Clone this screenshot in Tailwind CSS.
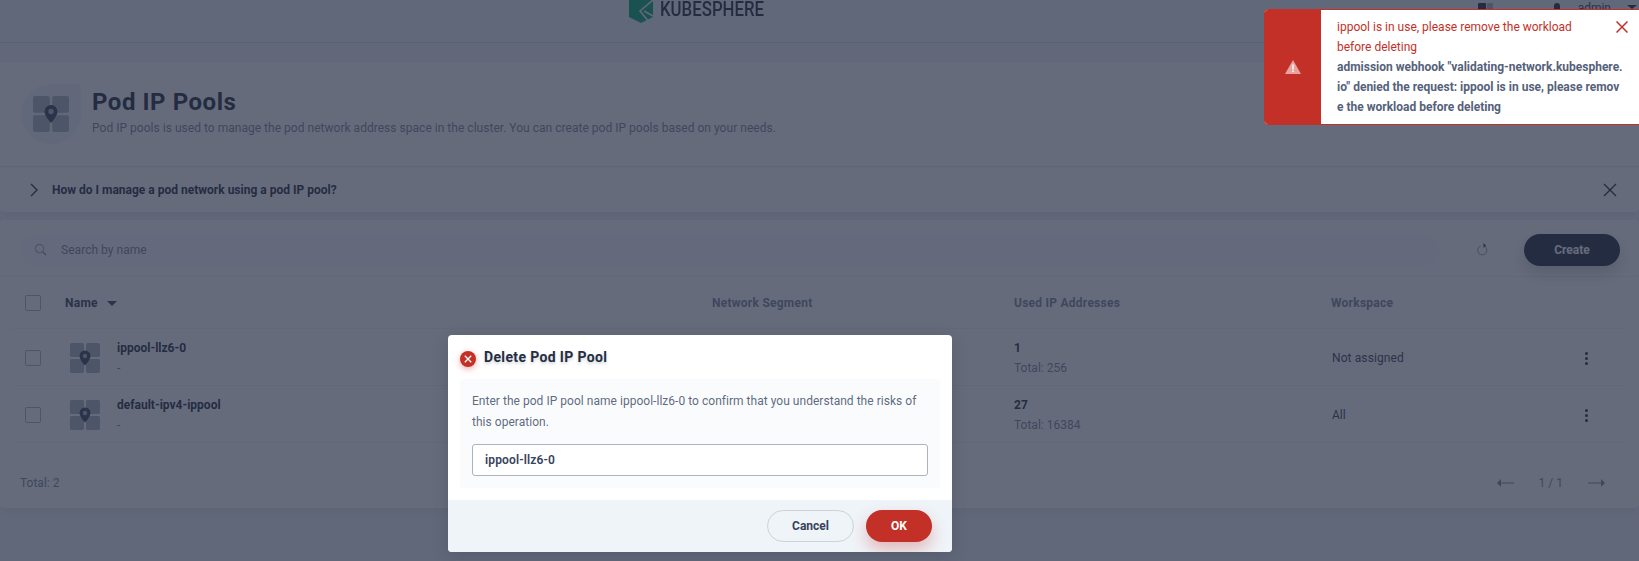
<!DOCTYPE html>
<html lang="en">
<head>
<meta charset="utf-8">
<title>Pod IP Pools</title>
<script src="https://cdn.jsdelivr.net/npm/@tailwindcss/browser@4"></script>
</head>
<body class="m-0">
<div class="relative w-[1639px] h-[561px] overflow-hidden bg-[#eff4f9] font-['Roboto',sans-serif] text-[12px] leading-[20px] text-[#36435c]">

  <!-- page behind the overlay -->
  <header class="flex items-start h-[43px] border-b border-[#d8dee5] pl-[629px] overflow-hidden">
    <svg class="w-[24px] h-[24px] mt-[-1px] mr-[7px]" viewBox="0 0 24 24"><path fill="#00aa72" d="M12 24 0 18V0h24v18z"/><path fill="none" stroke="#eff4f9" stroke-width="1.600" d="M24 1 11 12l10 12M24 17l-9-5"/></svg>
    <span class="inline-block origin-left scale-x-[.8] w-[102px] whitespace-nowrap text-[21px] leading-[19px] font-medium text-[#242e42]">KUBESPHERE</span>
    <div class="ml-auto flex items-start mt-[-2px]">
      <div class="flex gap-[1px] mt-[5px] mr-[61px]"><span class="w-[8px] h-[9px] bg-[#242e42] rounded-[1px]"></span><span class="w-[6px] h-[9px] bg-[#abb4be] rounded-[1px]"></span></div>
      <div class="w-[6px] h-[11px] mt-[5px] mr-[18px] bg-[#242e42] rounded-full"></div>
      <span class="mr-[16px] text-[#36435c]">admin</span>
      <span class="mt-[7px] mr-[2px] w-0 h-0 border-x-[5px] border-x-transparent border-t-[4px] border-t-[#242e42]"></span>
    </div>
  </header>

  <main class="pt-[19px]">
    <section class="bg-white rounded-[4px] shadow-[0_4px_8px_0_rgba(36,46,66,0.06)]">
      <div class="flex items-center h-[105px] pl-[21px] border-b border-[#e3e9ef]">
        <div class="flex items-center justify-center w-[60px] h-[60px] rounded-[30px] rounded-tr-[3px] bg-[#eff4f9]">
          <svg class="w-[36px] h-[36px]" viewBox="0 0 36 36">
            <rect width="16.800" height="16.800" rx="2" fill="#abb4be"/><rect x="19.200" width="16.800" height="16.800" rx="2" fill="#abb4be"/><rect y="19.200" width="16.800" height="16.800" rx="2" fill="#abb4be"/><rect x="19.200" y="19.200" width="16.800" height="16.800" rx="2" fill="#abb4be"/>
            <path fill="#36435c" d="M18 9a6.500 6.500 0 0 0-6.500 6.500c0 4.500 6.500 11.500 6.500 11.500s6.500-7 6.500-11.500A6.500 6.500 0 0 0 18 9z"/><circle cx="18" cy="15.500" r="2.700" fill="#abb4be"/>
          </svg>
        </div>
        <div class="ml-[11px] mt-[-4px]">
          <h1 class="text-[24px] leading-[32px] font-bold text-[#242e42] tracking-[0.55px]">Pod IP Pools</h1>
          <p class="text-[#79879c] tracking-[0.025px]">Pod IP pools is used to manage the pod network address space in the cluster. You can create pod IP pools based on your needs.</p>
        </div>
      </div>
      <div class="flex items-center h-[45px] pl-[28px] pr-[22px] pt-[1px]">
        <svg class="w-[12px] h-[14px] mr-[12px]" viewBox="0 0 12 14" fill="none" stroke="#242e42" stroke-width="1.400"><path d="M3 1l6 6-6 6"/></svg>
        <span class="font-bold text-[#242e42]">How do I manage a pod network using a pod IP pool?</span>
        <svg class="ml-auto w-[14px] h-[14px]" viewBox="0 0 14 14" fill="none" stroke="#242e42" stroke-width="1.400"><path d="M1 1l12 12M13 1 1 13"/></svg>
      </div>
    </section>

    <section class="mt-[8px] h-[288px] bg-white rounded-[4px] shadow-[0_4px_8px_0_rgba(36,46,66,0.06)]">
      <div class="flex items-center h-[57px] pl-[20px] pr-[19px] pt-[3px] border-b border-[#eff4f9]">
        <div class="flex items-center flex-1 h-[32px] pl-[14px] rounded-full bg-[#f9fbfd]">
          <svg class="w-[13px] h-[13px] mr-[14px]" viewBox="0 0 14 14" fill="none" stroke="#abb4be" stroke-width="1.300"><circle cx="6" cy="6" r="4.500"/><path stroke="#79879c" d="M9.500 9.500 13 13"/></svg>
          <span class="text-[#79879c] tracking-[0.04px]">Search by name</span>
        </div>
        <svg class="ml-[37px] mr-[36px] w-[11px] h-[13px]" viewBox="0 0 11 13" fill="none" stroke="#abb4be" stroke-width="1.200"><path d="M7 3a4.600 4.600 0 1 1-3.500 0"/><path fill="#36435c" stroke="none" d="M6.500 0 9 2.500 6.500 5z"/></svg>
        <button class="w-[96px] h-[32px] rounded-full bg-[#242e42] text-white font-bold shadow-[0_8px_16px_0_rgba(36,46,66,0.2)]">Create</button>
      </div>

      <div class="mx-[12px]">
        <div class="grid grid-cols-[53px_647px_302px_317px_296px] items-center h-[52px] border-b border-[#eff4f9] font-bold text-[#79879c] tracking-[0.25px]">
          <span class="ml-[13px] w-[16px] h-[16px] rounded-[2px] border border-[#abb4be] bg-white"></span>
          <div class="flex items-center"><span class="text-[#36435c]">Name</span><span class="ml-[9px] mt-[1px] w-0 h-0 border-x-[5px] border-x-transparent border-t-[5px] border-t-[#36435c]"></span></div>
          <span>Network Segment</span><span>Used IP Addresses</span><span>Workspace</span>
        </div>

        <div class="grid grid-cols-[53px_647px_302px_317px_296px] items-center h-[57px] pt-[2px] border-b border-[#eff4f9]">
          <span class="ml-[13px] w-[16px] h-[16px] rounded-[2px] border border-[#abb4be] bg-white"></span>
          <div class="flex items-center pl-[5px]">
            <svg class="w-[30px] h-[30px] mr-[17px]" viewBox="0 0 36 36">
              <rect width="16.800" height="16.800" rx="2" fill="#abb4be"/><rect x="19.200" width="16.800" height="16.800" rx="2" fill="#abb4be"/><rect y="19.200" width="16.800" height="16.800" rx="2" fill="#abb4be"/><rect x="19.200" y="19.200" width="16.800" height="16.800" rx="2" fill="#abb4be"/>
              <path fill="#36435c" d="M18 9a6.500 6.500 0 0 0-6.500 6.500c0 4.500 6.500 11.500 6.500 11.500s6.500-7 6.500-11.500A6.500 6.500 0 0 0 18 9z"/><circle cx="18" cy="15.500" r="2.700" fill="#abb4be"/>
            </svg>
            <div><div class="font-bold text-[#242e42]">ippool-llz6-0</div><div class="text-[#79879c]">-</div></div>
          </div>
          <span></span>
          <div><div class="font-bold text-[#242e42]">1</div><div class="text-[#79879c]">Total: 256</div></div>
          <div class="flex items-center justify-between pl-[1px] pr-[39px]"><span class="text-[#36435c] tracking-[0.1px]">Not assigned</span><span class="flex flex-col gap-[2px]"><i class="w-[3px] h-[3px] rounded-full bg-[#242e42]"></i><i class="w-[3px] h-[3px] rounded-full bg-[#242e42]"></i><i class="w-[3px] h-[3px] rounded-full bg-[#242e42]"></i></span></div>
        </div>

        <div class="grid grid-cols-[53px_647px_302px_317px_296px] items-center h-[57px] pt-[2px] border-b border-[#eff4f9]">
          <span class="ml-[13px] w-[16px] h-[16px] rounded-[2px] border border-[#abb4be] bg-white"></span>
          <div class="flex items-center pl-[5px]">
            <svg class="w-[30px] h-[30px] mr-[17px]" viewBox="0 0 36 36">
              <rect width="16.800" height="16.800" rx="2" fill="#abb4be"/><rect x="19.200" width="16.800" height="16.800" rx="2" fill="#abb4be"/><rect y="19.200" width="16.800" height="16.800" rx="2" fill="#abb4be"/><rect x="19.200" y="19.200" width="16.800" height="16.800" rx="2" fill="#abb4be"/>
              <path fill="#36435c" d="M18 9a6.500 6.500 0 0 0-6.500 6.500c0 4.500 6.500 11.500 6.500 11.500s6.500-7 6.500-11.500A6.500 6.500 0 0 0 18 9z"/><circle cx="18" cy="15.500" r="2.700" fill="#abb4be"/>
            </svg>
            <div><div class="font-bold text-[#242e42]">default-ipv4-ippool</div><div class="text-[#79879c]">-</div></div>
          </div>
          <span></span>
          <div><div class="font-bold text-[#242e42]">27</div><div class="text-[#79879c]">Total: 16384</div></div>
          <div class="flex items-center justify-between pl-[1px] pr-[39px]"><span class="text-[#36435c]">All</span><span class="flex flex-col gap-[2px]"><i class="w-[3px] h-[3px] rounded-full bg-[#242e42]"></i><i class="w-[3px] h-[3px] rounded-full bg-[#242e42]"></i><i class="w-[3px] h-[3px] rounded-full bg-[#242e42]"></i></span></div>
        </div>
      </div>

      <div class="flex items-center justify-between pl-[20px] pr-[34px] pt-[30px] text-[#79879c]">
        <span>Total: 2</span>
        <div class="flex items-center">
          <svg class="w-[17px] h-[10px]" viewBox="0 0 17 10"><path fill="#79879c" d="M4 1v3.500h13v1H4V9L0 5z"/></svg>
          <span class="mx-[25px]">1 / 1</span>
          <svg class="w-[17px] h-[10px]" viewBox="0 0 17 10"><path fill="#79879c" d="M13 1v3.500H0v1h13V9l4-4z"/></svg>
        </div>
      </div>
    </section>
  </main>

  <!-- modal mask -->
  <div class="absolute inset-0 bg-[#252c43]/70"></div>

  <!-- delete dialog -->
  <div class="absolute left-[448px] top-[335px] w-[504px] h-[217px] flex flex-col overflow-hidden rounded-[4px] bg-white shadow-[0_4px_16px_0_rgba(36,46,66,0.2)]">
    <div class="flex items-center h-[44px] pl-[12px]">
      <svg class="w-[16px] h-[16px] mt-[4px] drop-shadow-[0_2px_3px_rgba(195,48,40,0.4)]" viewBox="0 0 16 16"><circle cx="8" cy="8" r="8" fill="#c33028"/><path d="M4.800 4.800l6.400 6.400M11.200 4.800l-6.400 6.400" stroke="#fff" stroke-width="1.300"/></svg>
      <h2 class="ml-[8px] text-[14px] font-bold text-[#242e42] tracking-[0.35px] [text-shadow:0_2px_3px_rgba(36,46,66,0.2)]">Delete Pod IP Pool</h2>
    </div>
    <div class="mx-[12px] h-[109px] rounded-[4px] bg-[#f9fbfd] px-[12px] pt-[12px]">
      <p class="leading-[21px] text-[#36435c]/80 tracking-[0.03px]">Enter the pod IP pool name ippool-llz6-0 to confirm that you understand the risks of this operation.</p>
      <div class="mt-[11px] flex items-center h-[32px] pl-[12px] rounded-[3px] border border-[#abb4be] bg-white font-semibold text-[#36435c] tracking-[0.15px]">ippool-llz6-0</div>
    </div>
    <div class="mt-auto flex items-center justify-end gap-[12px] h-[52px] pr-[20px] bg-[#eff4f9]">
      <button class="w-[87px] h-[32px] rounded-full border border-[#ccd3db] font-bold text-[#36435c]">Cancel</button>
      <button class="w-[66px] h-[32px] rounded-full bg-[#c33028] font-bold text-white shadow-[0_8px_16px_0_rgba(195,48,40,0.3)]">OK</button>
    </div>
  </div>

  <!-- notification -->
  <div class="absolute left-[1264px] top-[9px] w-[386px] h-[116px] flex overflow-hidden rounded-[4px] border border-[#c33028] bg-white">
    <div class="flex items-center justify-center w-[56px] bg-[#c33028]">
      <svg class="w-[16px] h-[14px]" viewBox="0 0 16 14"><path fill="#e8a3a0" d="M8 0l8 14H0z"/><path stroke="#fff" stroke-width="1.500" d="M8 4.500v5M8 10.500v1.500"/></svg>
    </div>
    <div class="relative w-[304px] pl-[16px] pt-[7px]">
      <p class="w-[240px] text-[#c33028]">ippool is in use, please remove the workload before deleting</p>
      <p class="font-bold text-[#55617a] break-all">admission webhook "validating-network.kubesphere.io" denied the request: ippool is in use, please remove the workload before deleting</p>
      <svg class="absolute right-[-3px] top-[11px] w-[12px] h-[12px]" viewBox="0 0 12 12" fill="none" stroke="#c33028" stroke-width="1.500"><path d="M.5.500l11 11M11.500.500l-11 11"/></svg>
    </div>
  </div>
</div>
</body>
</html>
